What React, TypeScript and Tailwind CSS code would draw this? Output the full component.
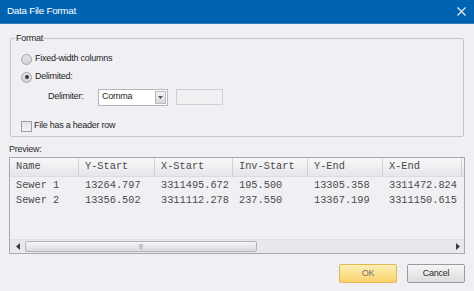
import React from 'react';

const columns = [
  { label: 'Name', w: 'w-[69px]' },
  { label: 'Y-Start', w: 'w-[76px]' },
  { label: 'X-Start', w: 'w-[78px]' },
  { label: 'Inv-Start', w: 'w-[75px]' },
  { label: 'Y-End', w: 'w-[75px]' },
  { label: 'X-End', w: 'w-[79px]' },
];

const rows = [
  ['Sewer 1', '13264.797', '3311495.672', '195.500', '13305.358', '3311472.824'],
  ['Sewer 2', '13356.502', '3311112.278', '237.550', '13367.199', '3311150.615'],
];

function Radio({ checked, label }: { checked?: boolean; label: string }) {
  return (
    <div className="flex items-center h-[18px] gap-[3px]">
      <span className="w-[11px] h-[11px] rounded-full border border-[#a4a4a8] bg-gradient-to-b from-[#e4e4e8] to-[#d2d2d8] flex items-center justify-center">
        {checked && <span className="w-[4px] h-[4px] rounded-full bg-[#3a3a3a]" />}
      </span>
      <span>{label}</span>
    </div>
  );
}

export default function App() {
  return (
    <div className="w-[474px] h-[291px] bg-[#f0f0f4] flex flex-col overflow-hidden text-[9px] tracking-[-0.25px] text-[#1e1e1e] font-['Liberation_Sans',Arial,sans-serif]">
      <div className="h-[24px] shrink-0 bg-[#0063b1] border-b border-[#2f7fc0] flex items-center justify-between pl-[7px] pr-[8px]">
        <span className="text-[9.8px] text-white">Data File Format</span>
        <svg width="9" height="9" viewBox="0 0 9 9" className="text-[#e8f0f8]">
          <path d="M0.5 0.5 L8.5 8.5 M8.5 0.5 L0.5 8.5" stroke="currentColor" strokeWidth="1.2" />
        </svg>
      </div>

      <div className="px-[10px] pt-[8px]">
        <fieldset className="border border-[#c6c6ca] rounded-[2px] pl-[10px] pr-[10px] pb-[1px]">
          <legend className="ml-[-6px] px-[1px] leading-[12px]">Format</legend>
          <div className="flex flex-col pt-[6px]">
            <Radio label="Fixed-width columns" />
            <Radio checked label="Delimited:" />
            <div className="flex items-center h-[22px] pl-[27px]">
              <span className="w-[50px]">Delimiter:</span>
              <div className="w-[70px] h-[17px] bg-white border border-[#b4b6bc] flex items-center justify-between pl-[3px] pr-[1px]">
                <span>Comma</span>
                <span className="w-[11px] h-[13px] border border-[#b8b8c0] bg-gradient-to-b from-[#f2f2f4] to-[#d8d8de] flex items-center justify-center">
                  <svg width="5" height="3" viewBox="0 0 5 3">
                    <path d="M0 0 H5 L2.5 3 Z" fill="#5a5a5a" />
                  </svg>
                </span>
              </div>
              <div className="ml-[8px] w-[47px] h-[16px] bg-[#f0f0f2] border border-[#cfcfd4]" />
            </div>
            <div className="flex items-center h-[18px] gap-[2px] mt-[9px]">
              <span className="w-[11px] h-[11px] border border-[#9c9ca2] bg-gradient-to-b from-[#e2e2e6] to-[#f4f4f6]" />
              <span>File has a header row</span>
            </div>
          </div>
        </fieldset>
      </div>

      <div className="px-[9px] mt-[6px]">
        <div className="leading-[12px] text-[#2a2a2a]">Preview:</div>
        <div className="mt-[2px] h-[97px] border border-[#a9a9ad] flex flex-col justify-between overflow-hidden tracking-normal">
          <div className="flex flex-col font-['Liberation_Mono','Courier_New',monospace] text-[10.3px] text-[#4a4a4a]">
            <div className="flex h-[19px] bg-gradient-to-b from-[#f8f8f9] to-[#e6e6ea] border-b border-[#dcdcdf]">
              {columns.map((c) => (
                <div key={c.label} className={`${c.w} shrink-0 border-r border-[#d2d2d6] flex items-center pl-[6px]`}>
                  {c.label}
                </div>
              ))}
            </div>
            <div className="pt-[1px]">
              {rows.map((r) => (
                <div key={r[0]} className="flex h-[15px] items-center">
                  {r.map((v, i) => (
                    <div key={i} className={`${columns[i].w} shrink-0 pl-[6px]`}>
                      {v}
                    </div>
                  ))}
                </div>
              ))}
            </div>
          </div>

          <div className="h-[14px] bg-[#e9e9ed] border-t border-[#e0e0e4] flex items-center">
            <div className="w-[15px] flex justify-center">
              <svg width="4" height="7" viewBox="0 0 4 7">
                <path d="M4 0 V7 L0 3.5 Z" fill="#3c3c3c" />
              </svg>
            </div>
            <div className="w-[232px] h-[11px] rounded-[2px] border border-[#b2b2b8] bg-gradient-to-b from-[#f6f6f8] to-[#dadade] flex items-center justify-center">
              <span className="w-[6px] h-[5px] bg-[#c4c4c8] border-x border-[#e8e8ea]" />
            </div>
            <div className="flex-1" />
            <div className="w-[13px] flex justify-center">
              <svg width="4" height="7" viewBox="0 0 4 7">
                <path d="M0 0 V7 L4 3.5 Z" fill="#3c3c3c" />
              </svg>
            </div>
          </div>
        </div>
      </div>

      <div className="flex justify-end gap-[10px] pr-[9px] mt-[10px]">
        <button className="w-[58px] h-[19px] rounded-[2px] border border-[#e1b950] bg-gradient-to-b from-[#fdeeb4] to-[#f9d26a] text-[#707070] text-[9px]">
          OK
        </button>
        <button className="w-[58px] h-[19px] rounded-[2px] border border-[#9c9ca0] bg-gradient-to-b from-[#f6f6f6] to-[#dcdcde] text-[#2a2a2a] text-[9px]">
          Cancel
        </button>
      </div>
    </div>
  );
}
